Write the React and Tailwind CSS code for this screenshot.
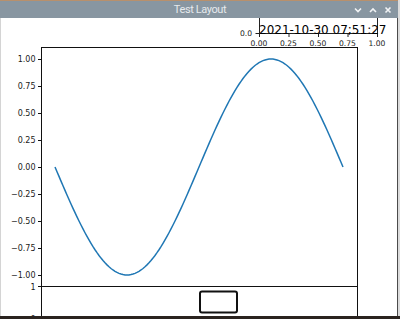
import React from "react";

const yTicks = [1, 0.75, 0.5, 0.25, 0, -0.25, -0.5, -0.75, -1];
const insetTicks = ["0.00", "0.25", "0.50", "0.75", "1.00"];

function fmt(v) {
  const s = Math.abs(v).toFixed(2);
  return v < 0 ? "\u2212" + s : s;
}

function sinePath() {
  let d = "";
  for (let i = 0; i <= 288; i += 2) {
    const x = 55 + i;
    const y = 167 + 108 * Math.sin((2 * Math.PI * i) / 288);
    d += (i === 0 ? "M" : "L") + x.toFixed(2) + " " + y.toFixed(2) + " ";
  }
  return d;
}

function Chevron({ up }) {
  return (
    <svg width="8" height="6" viewBox="0 0 8 6">
      <path
        d={up ? "M1 5 L4 2 L7 5" : "M1 1.5 L4 4.5 L7 1.5"}
        fill="none"
        stroke="#f2f4f6"
        strokeWidth="1.6"
      />
    </svg>
  );
}

function Plot() {
  return (
    <svg width="396" height="298" viewBox="1 18 396 298" className="block font-['DejaVu_Sans',sans-serif]">
      {/* main axes */}
      <g stroke="#111" strokeWidth="1" fill="none">
        <line x1="41.5" y1="47.5" x2="41.5" y2="330" />
        <line x1="41" y1="47.5" x2="358" y2="47.5" />
        <line x1="357.5" y1="47.5" x2="357.5" y2="330" />
        <line x1="41" y1="286.5" x2="358" y2="286.5" />
      </g>
      {yTicks.map((v) => {
        const y = 167 - 108 * v;
        return (
          <g key={v}>
            <line x1="38" y1={y + 0.5} x2="41.5" y2={y + 0.5} stroke="#111" />
            <text x="35.5" y={y + 3.3} fontSize="8" textAnchor="end" fill="#1a1a1a">
              {fmt(v)}
            </text>
          </g>
        );
      })}
      <path d={sinePath()} fill="none" stroke="#1f77b4" strokeWidth="1.5" />

      {/* lower axes */}
      <line x1="38" y1="286.5" x2="41.5" y2="286.5" stroke="#111" />
      <text x="35.5" y="289.5" fontSize="8" textAnchor="end" fill="#1a1a1a">1</text>
      <text x="35.5" y="321.5" fontSize="8" textAnchor="end" fill="#1a1a1a">0</text>
      <rect x="200" y="291.5" width="37" height="21" rx="2" fill="none" stroke="#111" strokeWidth="2" />

      {/* inset axes */}
      <g stroke="#222" strokeWidth="1" fill="none">
        <line x1="259.5" y1="0" x2="259.5" y2="33.5" />
        <line x1="377.5" y1="0" x2="377.5" y2="33.5" />
        <line x1="259" y1="33.5" x2="378" y2="33.5" />
        <line x1="255.5" y1="33.5" x2="259.5" y2="33.5" />
      </g>
      <text x="252" y="36.3" fontSize="7.6" textAnchor="end" fill="#1a1a1a">0.0</text>
      {insetTicks.map((t, i) => {
        const x = 259.5 + i * 29.5;
        return (
          <g key={t}>
            <line x1={x} y1="33.5" x2={x} y2="37" stroke="#222" />
            <text x={x - 0.5} y="46.3" fontSize="7.6" textAnchor="middle" fill="#1a1a1a">
              {t}
            </text>
          </g>
        );
      })}
      <text x="259" y="34" fontSize="12" fill="#000">2021-10-30 07;51:27</text>
    </svg>
  );
}

export default function App() {
  return (
    <div className="w-[400px] h-[319px] flex flex-col bg-[#2a231f] overflow-hidden">
      <div className="flex h-[316px]">
        <div className="w-[398px] flex flex-col">
          <div className="h-px bg-[#b8906c]" />
          <div className="h-[17px] bg-[#8896a1] flex items-center relative">
            <span className="flex-1 text-center text-[11px] tracking-[-0.4px] text-[#e6eaed] leading-none pl-[2px] font-['Roboto',sans-serif]">
              Test Layout
            </span>
            <div className="absolute right-[6px] top-[5px] flex items-center gap-[7px]">
              <Chevron />
              <Chevron up />
              <svg width="8" height="8" viewBox="0 0 8 8">
                <path d="M1.5 1.5 L6.5 6.5 M6.5 1.5 L1.5 6.5" stroke="#f2f4f6" strokeWidth="1.6" />
              </svg>
            </div>
          </div>
          <div className="flex-1 bg-white border-l border-l-[#d4d4d4] border-r border-r-[#4b4b4b] overflow-hidden">
            <Plot />
          </div>
        </div>
        <div className="w-[2px] bg-[#dcdcdc]" />
      </div>
      <div className="flex-1 bg-[#2a231f]" />
    </div>
  );
}
